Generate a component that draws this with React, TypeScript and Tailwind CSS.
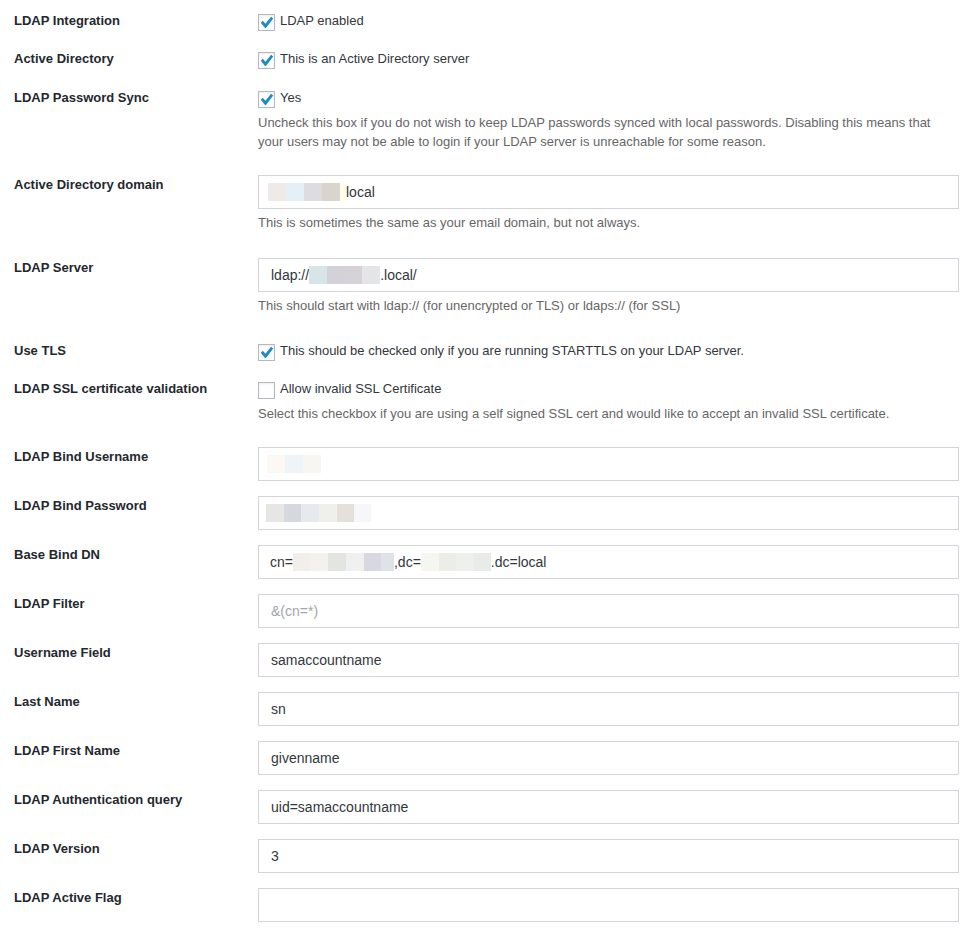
import React from "react";

const FONT = "font-['Liberation_Sans',Arial,sans-serif]";

type Blk = { w: number; c: string };

function Blocks({ items }: { items: Blk[] }) {
  return (
    <span className="inline-flex h-[18px]">
      {items.map((b, i) => (
        <span key={i} className="block h-[18px]" style={{ width: b.w, backgroundColor: b.c }} />
      ))}
    </span>
  );
}

function Check({ checked }: { checked: boolean }) {
  return (
    <span className="mt-[3px] flex h-[17px] w-[17px] shrink-0 items-center justify-center border border-[#b4b9be] bg-white shadow-[inset_0_1px_2px_rgba(0,0,0,0.08)]">
      {checked && (
        <svg viewBox="0 0 17 17" className="h-[17px] w-[17px]">
          <polygon points="2.0,8.7 4.3,6.6 7.3,9.8 13.7,2.1 16.1,4.0 7.9,14.6 6.8,14.6" fill="#1e8cbe" />
        </svg>
      )}
    </span>
  );
}

function Label({ children }: { children: React.ReactNode }) {
  return <div className="w-[244px] shrink-0 text-[13px] font-bold leading-[20px] text-[#23282d]">{children}</div>;
}

function Desc({ children, mt }: { children: React.ReactNode; mt: string }) {
  return <p className={`${mt} text-[13px] leading-[19px] text-[#666]`}>{children}</p>;
}

function CheckRow({
  label,
  text,
  checked = true,
  mt,
  desc,
}: {
  label: string;
  text: string;
  checked?: boolean;
  mt: string;
  desc?: React.ReactNode;
}) {
  return (
    <div className={`${mt} flex`}>
      <Label>{label}</Label>
      <div className="w-[701px]">
        <label className="flex items-start gap-[5px] text-[13px] leading-[20px] text-[#32373c]">
          <Check checked={checked} />
          <span>{text}</span>
        </label>
        {desc && <Desc mt="mt-[5px]">{desc}</Desc>}
      </div>
    </div>
  );
}

function Field({ children, placeholder }: { children?: React.ReactNode; placeholder?: string }) {
  return (
    <div className="flex h-[34px] w-[701px] items-center border border-[#d4d5dc] bg-white px-3 text-[14px] text-[#32373c]">
      {children}
      {placeholder && <span className="text-[#a3a5ab]">{placeholder}</span>}
    </div>
  );
}

function InputRow({
  label,
  mt,
  desc,
  children,
  placeholder,
}: {
  label: string;
  mt: string;
  desc?: React.ReactNode;
  children?: React.ReactNode;
  placeholder?: string;
}) {
  return (
    <div className={`${mt} flex`}>
      <Label>{label}</Label>
      <div className="w-[701px]">
        <Field placeholder={placeholder}>{children}</Field>
        {desc && <Desc mt="mt-1">{desc}</Desc>}
      </div>
    </div>
  );
}

export default function App() {
  return (
    <div className={`${FONT} min-h-[929px] w-[966px] bg-white pl-[14px] pr-[7px] pt-[11px]`}>
      <CheckRow mt="mt-0" label="LDAP Integration" text="LDAP enabled" />
      <CheckRow mt="mt-[18px]" label="Active Directory" text="This is an Active Directory server" />
      <CheckRow
        mt="mt-[19px]"
        label="LDAP Password Sync"
        text="Yes"
        desc={
          <>
            Uncheck this box if you do not wish to keep LDAP passwords synced with local passwords. Disabling this means that
            <br />
            your users may not be able to login if your LDAP server is unreachable for some reason.
          </>
        }
      />
      <InputRow
        mt="mt-[24px]"
        label="Active Directory domain"
        desc="This is sometimes the same as your email domain, but not always."
      >
        <span className="-ml-[3px] flex items-center">
          <Blocks
            items={[
              { w: 18, c: "#efe9e7" },
              { w: 18, c: "#e4f0f5" },
              { w: 18, c: "#dddcdf" },
              { w: 18, c: "#d9d4ce" },
              { w: 6, c: "#fffde8" },
            ]}
          />
          <span>local</span>
        </span>
      </InputRow>
      <InputRow
        mt="mt-[26px]"
        label="LDAP Server"
        desc="This should start with ldap:// (for unencrypted or TLS) or ldaps:// (for SSL)"
      >
        <span>ldap://</span>
        <Blocks
          items={[
            { w: 18, c: "#d8e5e6" },
            { w: 17, c: "#d2d2d8" },
            { w: 18, c: "#d6d2d8" },
            { w: 18, c: "#e3e5e6" },
          ]}
        />
        <span>.local/</span>
      </InputRow>
      <CheckRow
        mt="mt-[26px]"
        label="Use TLS"
        text="This should be checked only if you are running STARTTLS on your LDAP server."
      />
      <CheckRow
        mt="mt-[18px]"
        label="LDAP SSL certificate validation"
        text="Allow invalid SSL Certificate"
        checked={false}
        desc="Select this checkbox if you are using a self signed SSL cert and would like to accept an invalid SSL certificate."
      />
      <InputRow mt="mt-[24px]" label="LDAP Bind Username">
        <span className="-ml-[4px] flex">
          <Blocks
            items={[
              { w: 18, c: "#fcf8f4" },
              { w: 18, c: "#eef4f7" },
              { w: 18, c: "#f8f6f2" },
            ]}
          />
        </span>
      </InputRow>
      <InputRow mt="mt-[15px]" label="LDAP Bind Password">
        <span className="-ml-[5px] flex">
          <Blocks
            items={[
              { w: 18, c: "#e8e6e5" },
              { w: 17, c: "#d6d8e0" },
              { w: 18, c: "#e6e9ed" },
              { w: 18, c: "#efefec" },
              { w: 17, c: "#e6e0da" },
              { w: 17, c: "#f5f7fa" },
            ]}
          />
        </span>
      </InputRow>
      <InputRow mt="mt-[15px]" label="Base Bind DN">
        <span className="-ml-[1px]">cn=</span>
        <Blocks
          items={[
            { w: 17, c: "#f2efeb" },
            { w: 18, c: "#f5f1ee" },
            { w: 18, c: "#e3e6e0" },
            { w: 18, c: "#f0f0f0" },
            { w: 17, c: "#d9d7e0" },
            { w: 13, c: "#dde3e8" },
          ]}
        />
        <span>,dc=</span>
        <Blocks
          items={[
            { w: 18, c: "#f6f6f1" },
            { w: 17, c: "#ebede7" },
            { w: 18, c: "#eef0eb" },
            { w: 17, c: "#e9ebe8" },
          ]}
        />
        <span>.dc=local</span>
      </InputRow>
      <InputRow mt="mt-[15px]" label="LDAP Filter" placeholder="&(cn=*)" />
      <InputRow mt="mt-[15px]" label="Username Field">
        samaccountname
      </InputRow>
      <InputRow mt="mt-[15px]" label="Last Name">
        sn
      </InputRow>
      <InputRow mt="mt-[15px]" label="LDAP First Name">
        givenname
      </InputRow>
      <InputRow mt="mt-[15px]" label="LDAP Authentication query">
        uid=samaccountname
      </InputRow>
      <InputRow mt="mt-[15px]" label="LDAP Version">
        3
      </InputRow>
      <InputRow mt="mt-[15px]" label="LDAP Active Flag" />
    </div>
  );
}
